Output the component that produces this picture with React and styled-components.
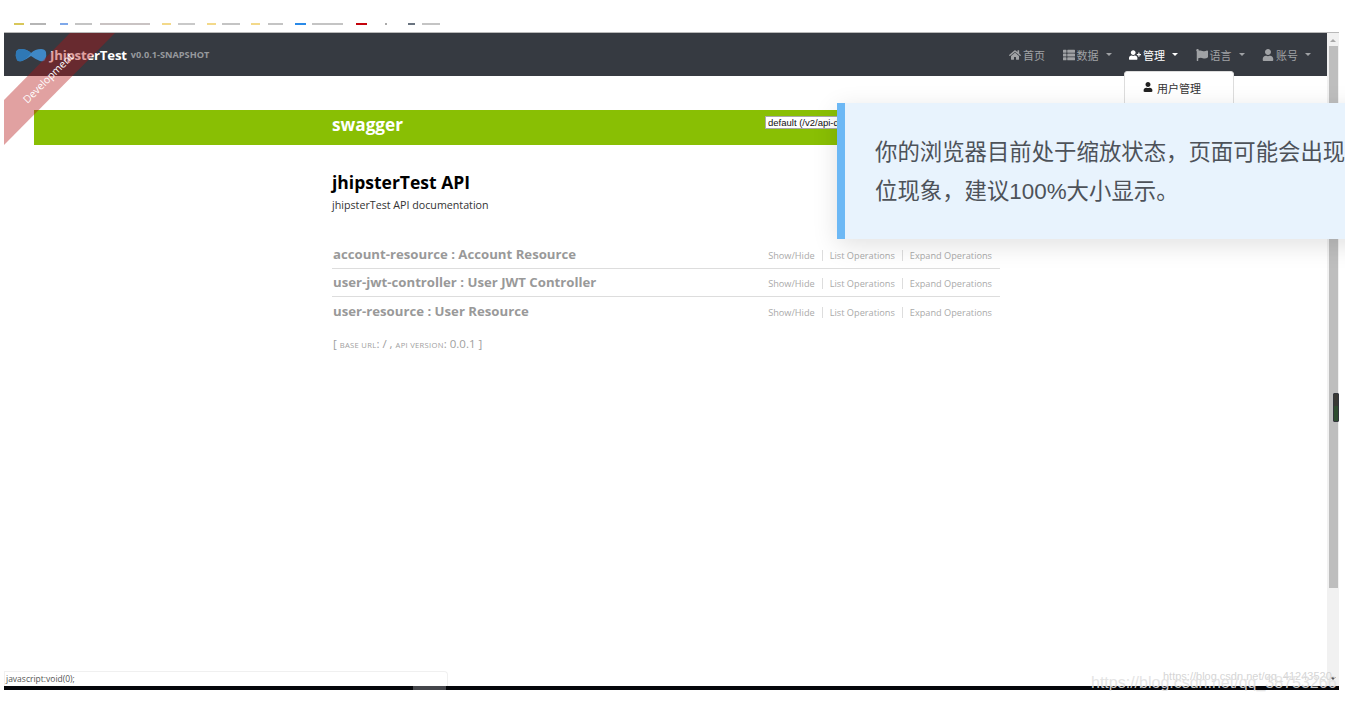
import styled, { createGlobalStyle } from 'styled-components';
import { FaHome, FaThList, FaUserPlus, FaFlag, FaUser } from 'react-icons/fa';

const GlobalStyle = createGlobalStyle`
  html, body { margin: 0; height: 100%; overflow: hidden; background: #fff; }
  * { box-sizing: border-box; }
  body { font-family: "Open Sans", "Noto Sans CJK SC", sans-serif; }
`;

const cjk = `"Liberation Sans", "Noto Sans CJK SC", sans-serif`;

// ── Frame ────────────────────────────────────────────────────
const Page = styled.div`
  position: relative;
  width: 1345px;
  height: 702px;
  overflow: hidden;
  display: flex;
  flex-direction: column;
`;

const BookmarkStrip = styled.div`
  height: 33px;
  flex-shrink: 0;
  margin: 0 6px 0 4px;
  padding: 23px 0 0 10px;
  display: flex;
  align-items: flex-start;
  border-bottom: 1px solid #b9b9b9;
`;

const BookmarkBit = styled.span`
  width: ${({ $w }) => $w}px;
  height: 2px;
  margin-right: ${({ $gap }) => $gap}px;
  background: ${({ $c }) => $c};
`;

const Browser = styled.div`
  height: 653px;
  flex-shrink: 0;
  margin-left: 4px;
  display: flex;
`;

const Viewport = styled.div`
  width: 1323px;
  display: flex;
  flex-direction: column;
`;

const Scrollbar = styled.div`
  width: 12px;
  background: #f1f1f1;
  padding: 13px 1px 0 2px;
  display: flex;
  flex-direction: column;
`;

const ScrollThumb = styled.div`
  height: 542px;
  background: #bebebe;
`;

const BlackBar = styled.div`
  height: 4px;
  width: 1335px;
  flex-shrink: 0;
  margin-left: 4px;
  background: #05060a;
  padding-left: 409px;
`;

const BlackBarTab = styled.div`
  width: 33px;
  height: 4px;
  background: #44454a;
`;

// ── Navbar ───────────────────────────────────────────────────
const Navbar = styled.nav`
  height: 43px;
  flex-shrink: 0;
  background: #363a41;
  display: flex;
  align-items: center;
  padding: 0 16px 0 11px;
`;

const Brand = styled.div`
  display: flex;
  align-items: center;
  flex: 1;
`;

const BrandName = styled.span`
  font-family: "Open Sans", sans-serif;
  font-size: 13.2px;
  font-weight: 700;
  color: #fff;
  margin-left: 3px;
  letter-spacing: -0.2px;
`;

const BrandVersion = styled.span`
  font-family: "Open Sans", sans-serif;
  font-size: 9.2px;
  font-weight: 700;
  color: #96999d;
  margin-left: 4px;
`;

const NavItems = styled.div`
  display: flex;
  align-items: center;
  gap: 17.5px;
`;

const NavItem = styled.div`
  display: flex;
  align-items: center;
  font-family: ${cjk};
  font-size: 11px;
  color: ${({ $active }) => ($active ? '#fff' : '#a0a2a5')};
  svg { margin-right: 2px; font-size: 12px; }
`;

const Caret = styled.span`
  width: 0;
  height: 0;
  margin-left: 7px;
  border-left: 3.5px solid transparent;
  border-right: 3.5px solid transparent;
  border-top: 3.5px solid currentColor;
`;

// ── Swagger ──────────────────────────────────────────────────
const SwaggerHeader = styled.header`
  margin: 34px 0 0 30px;
  height: 35px;
  flex-shrink: 0;
  background: #89bf04;
  display: flex;
  align-items: flex-start;
  padding: 3px 0 0 298px;
`;

const SwaggerLogo = styled.span`
  width: 433px;
  font-size: 17.2px;
  font-weight: 700;
  line-height: 23px;
  color: #fff;
`;

const ApiSelect = styled.div`
  width: 125px;
  height: 13px;
  margin-top: 3px;
  background: #fff;
  border: 1px solid #aaa;
  font-family: "Liberation Sans", sans-serif;
  font-size: 9.5px;
  line-height: 11px;
  padding-left: 2px;
  color: #111;
  white-space: nowrap;
`;

const SwaggerBody = styled.main`
  width: 668px;
  margin-left: 328px;
  padding-top: 25px;
`;

const ApiTitle = styled.h1`
  margin: 0;
  font-size: 17.5px;
  line-height: 24px;
  font-weight: 700;
  color: #000;
`;

const ApiDescription = styled.p`
  margin: 4px 0 0;
  font-size: 10.7px;
  line-height: 15px;
  color: #333;
`;

const ResourceList = styled.div`
  margin-top: 27px;
`;

const ResourceRow = styled.div`
  height: 28.5px;
  display: flex;
  align-items: center;
  justify-content: space-between;
  border-bottom: ${({ $last }) => ($last ? 'none' : '1px solid #ddd')};
`;

const ResourceName = styled.span`
  font-size: 13.2px;
  font-weight: 700;
  color: #999;
  padding-left: 1px;
`;

const ResourceLinks = styled.div`
  display: flex;
  align-items: center;
  padding: 3px 8px 0 0;
`;

const ResourceLink = styled.span`
  font-size: 9.2px;
  line-height: 11px;
  color: #aaa;
  padding-left: 7px;
  padding-right: 7px;
  border-right: ${({ $last }) => ($last ? 'none' : '1px solid #ddd')};
  ${({ $last }) => $last && 'padding-right: 0;'}
`;

const BaseInfo = styled.div`
  margin-top: 10px;
  padding-left: 1px;
  font-size: 11.5px;
  color: #a0a0a0;
`;

const SmallCaps = styled.span`
  font-size: 7.6px;
  text-transform: uppercase;
  letter-spacing: 0.3px;
`;

// ── Overlays ─────────────────────────────────────────────────
const Ribbon = styled.div`
  position: absolute;
  left: 4px;
  top: 33px;
  width: 112px;
  height: 112px;
  background: rgba(180, 20, 20, 0.4);
  clip-path: polygon(66px 0, 111px 0, 0 112px, 0 67px);
`;

const RibbonText = styled.span`
  position: absolute;
  left: 44px;
  top: 45px;
  transform: translate(-50%, -50%) rotate(-45deg);
  font-size: 10.5px;
  color: #fff;
`;

const Dropdown = styled.div`
  position: absolute;
  left: 1124px;
  top: 71px;
  width: 110px;
  height: 40px;
  background: #fff;
  border: 1px solid #ddd;
  border-radius: 3px 3px 0 0;
  padding: 8px 0 0 18px;
  display: flex;
  align-items: flex-start;
  font-family: ${cjk};
  font-size: 11px;
  color: #333;
  svg { margin: 2px 4px 0 0; font-size: 10px; color: #222; }
`;

const Toast = styled.div`
  position: absolute;
  left: 837px;
  top: 103px;
  width: 562px;
  height: 136px;
  background: #e8f3fd;
  border-left: 8px solid #6cb8f5;
  padding: 30px 30px 0;
  font-family: ${cjk};
  font-size: 22.4px;
  line-height: 39px;
  color: #4d5259;
  box-shadow: 0 6px 24px rgba(0, 0, 0, 0.12);
`;

const StatusBar = styled.div`
  position: absolute;
  left: 4px;
  top: 671px;
  width: 444px;
  height: 15px;
  background: #fff;
  border: 1px solid #f0f0f0;
  border-bottom: none;
  border-radius: 0 4px 0 0;
  padding-left: 1px;
  font-size: 8.5px;
  line-height: 14px;
  color: #555;
`;

const ScrollMarker = styled.div`
  position: absolute;
  left: 1333px;
  top: 393px;
  width: 6px;
  height: 29px;
  background: linear-gradient(#3a3a35 0 45%, #2f4d30 45% 100%);
  border: 1px solid #33363c;
  border-radius: 1px;
`;

const ScrollArrow = styled.span`
  position: absolute;
  left: ${({ $left }) => $left}px;
  top: ${({ $top }) => $top}px;
  width: 0;
  height: 0;
  border-left: 3px solid transparent;
  border-right: 3px solid transparent;
  ${({ $down }) => ($down ? 'border-top: 3px solid #555;' : 'border-bottom: 3px solid #a8a8a8;')}
`;

const WatermarkBig = styled.span`
  position: absolute;
  left: 1091px;
  top: 674px;
  font-family: "Liberation Sans", sans-serif;
  font-size: 16px;
  color: rgba(225, 225, 225, 0.9);
  white-space: nowrap;
`;

const WatermarkSmall = styled.span`
  position: absolute;
  left: 1163px;
  top: 670px;
  font-family: "Liberation Sans", sans-serif;
  font-size: 11px;
  color: rgba(205, 205, 205, 0.85);
  white-space: nowrap;
`;

// ── Data ─────────────────────────────────────────────────────
const bookmarks = [
  [10, '#d8c75a', 6], [16, '#b5b5b5', 14], [8, '#7fa8ea', 7], [17, '#c4c4c4', 8], [50, '#c9c3c3', 12],
  [9, '#f3d98a', 7], [17, '#c9c9c9', 12], [9, '#f3d98a', 6], [18, '#c4c4c4', 11], [9, '#f3d98a', 8],
  [15, '#c4c4c4', 12], [11, '#2a8ae8', 6], [31, '#c4c4c4', 13], [11, '#c4040c', 18], [2, '#aaa', 21],
  [7, '#6a7480', 7], [18, '#c4c4c4', 0],
];

const navItems = [
  { icon: FaHome, label: '首页' },
  { icon: FaThList, label: '数据', caret: true },
  { icon: FaUserPlus, label: '管理', caret: true, active: true },
  { icon: FaFlag, label: '语言', caret: true },
  { icon: FaUser, label: '账号', caret: true },
];

const resources = [
  'account-resource : Account Resource',
  'user-jwt-controller : User JWT Controller',
  'user-resource : User Resource',
];

const BowLogo = () => (
  <svg width="32" height="14" viewBox="0 0 32 14">
    <path d="M1 4 Q2 1 6 1 Q12 1 16 5 Q20 1 26 1 Q30 1 31 4 Q32 8 30 12 Q29 14 25 13 Q20 11 16 8 Q12 11 7 13 Q3 14 2 12 Q0 8 1 4 Z" fill="#3f88c5" />
    <path d="M1 4 Q2 1 6 1 Q12 1 16 5 Q12 11 7 13 Q3 14 2 12 Q0 8 1 4 Z" fill="#2f78b5" />
  </svg>
);

// ── Component ────────────────────────────────────────────────
export default function App() {
  return (
    <Page>
      <GlobalStyle />
      <BookmarkStrip>
        {bookmarks.map(([w, c, gap], i) => (
          <BookmarkBit key={i} $w={w} $c={c} $gap={gap} />
        ))}
      </BookmarkStrip>

      <Browser>
        <Viewport>
          <Navbar>
            <Brand>
              <BowLogo />
              <BrandName>JhipsterTest</BrandName>
              <BrandVersion>v0.0.1-SNAPSHOT</BrandVersion>
            </Brand>
            <NavItems>
              {navItems.map(({ icon: Icon, label, caret, active }) => (
                <NavItem key={label} $active={active}>
                  <Icon />
                  {label}
                  {caret && <Caret />}
                </NavItem>
              ))}
            </NavItems>
          </Navbar>

          <SwaggerHeader>
            <SwaggerLogo>swagger</SwaggerLogo>
            <ApiSelect>default (/v2/api-docs)</ApiSelect>
          </SwaggerHeader>

          <SwaggerBody>
            <ApiTitle>jhipsterTest API</ApiTitle>
            <ApiDescription>jhipsterTest API documentation</ApiDescription>
            <ResourceList>
              {resources.map((name, i) => (
                <ResourceRow key={name} $last={i === resources.length - 1}>
                  <ResourceName>{name}</ResourceName>
                  <ResourceLinks>
                    <ResourceLink>Show/Hide</ResourceLink>
                    <ResourceLink>List Operations</ResourceLink>
                    <ResourceLink $last>Expand Operations</ResourceLink>
                  </ResourceLinks>
                </ResourceRow>
              ))}
            </ResourceList>
            <BaseInfo>
              [ <SmallCaps>base url</SmallCaps>: / , <SmallCaps>api version</SmallCaps>: 0.0.1 ]
            </BaseInfo>
          </SwaggerBody>
        </Viewport>
        <Scrollbar>
          <ScrollThumb />
        </Scrollbar>
      </Browser>

      <BlackBar>
        <BlackBarTab />
      </BlackBar>

      <Ribbon>
        <RibbonText>Development</RibbonText>
      </Ribbon>
      <Dropdown>
        <FaUser />
        用户管理
      </Dropdown>
      <Toast>你的浏览器目前处于缩放状态，页面可能会出现错位现象，建议100%大小显示。</Toast>
      <StatusBar>javascript:void(0);</StatusBar>
      <ScrollMarker />
      <ScrollArrow $left={1330} $top={39} />
      <ScrollArrow $left={1330} $top={677} $down />
      <WatermarkSmall>https://blog.csdn.net/qq_41243520</WatermarkSmall>
      <WatermarkBig>https://blog.csdn.net/qq_38753266</WatermarkBig>
    </Page>
  );
}
